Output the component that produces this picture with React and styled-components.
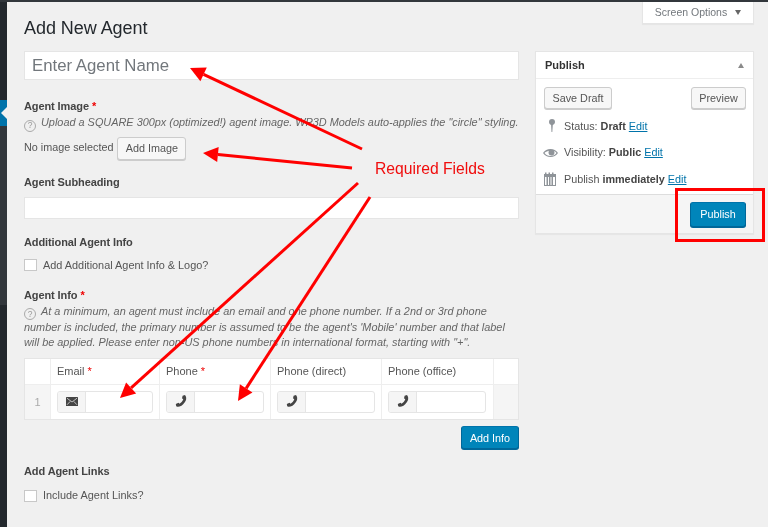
import React from "react";
import styled, { createGlobalStyle } from "styled-components";

const Global = createGlobalStyle`
  html, body { margin: 0; padding: 0; background: #f0f0f0; }
  * { box-sizing: border-box; }
  body { font: 11px/1.4 "Liberation Sans", Arial, sans-serif; color: #444; }
`;

const Page = styled.div`
  position: relative; width: 768px; height: 527px; overflow: hidden;
  display: flex; flex-direction: column; background: #f0f0f0; filter: blur(.35px);
`;
const TopBar = styled.div`height: 2px; background: #32373c; flex: none;`;
const Shell = styled.div`display: flex; flex: 1; min-height: 0;`;
const Sidebar = styled.div`width: 7px; flex: none; display: flex; flex-direction: column; background: #23282d;`;
const SideTop = styled.div`height: 98px; background: #23282d;`;
const SideActive = styled.div`
  height: 26px; background: #0073aa; display: flex; align-items: center; justify-content: flex-end;
  &::after { content: ""; border: 6px solid transparent; border-right-color: #f1f1f1; border-left-width: 0; }
`;
const SideSub = styled.div`height: 179px; background: #32373c;`;
const Main = styled.div`flex: 1; padding: 0 14px 0 17px; min-width: 0;`;
const Header = styled.div`display: flex; justify-content: space-between; align-items: flex-start; height: 49px;`;
const ScreenTab = styled.div`
  width: 112px; height: 22px; background: #fff; border: 1px solid #e5e5e5; border-top: 0;
  box-shadow: 0 1px 1px rgba(0,0,0,.04); display: flex; align-items: center; justify-content: center; gap: 8px;
  color: #72777c; font-size: 10.5px;
`;
const Caret = styled.span`
  width: 0; height: 0; border-left: 3.5px solid transparent; border-right: 3.5px solid transparent;
  ${p => p.$up ? "border-bottom: 5px solid #8a8a8a;" : "border-top: 5px solid #666;"}
`;
const Title = styled.h1`
  margin: 15px 0 0; font-size: 18px; line-height: 22px; font-weight: 400; color: #23282d; letter-spacing: -.05px;
`;
const Columns = styled.div`display: grid; grid-template-columns: 495px 219px; gap: 16px; align-items: start;`;
const Left = styled.div`display: flex; flex-direction: column; min-width: 0;`;
const TitleInput = styled.div`
  height: 29px; background: #fff; border: 1px solid #e5e5e5; padding-left: 7px;
  font-size: 16.8px; line-height: 28px; color: #72777c;
`;
const Field = styled.div`margin-top: ${p => p.$top}px;`;
const Label = styled.div`font-size: 11px; font-weight: 700; line-height: 16px; color: #444; letter-spacing: -.1px;`;
const Req = styled.span`color: #e00; margin-left: 3px;`;
const Help = styled.div`font-size: 10.9px; font-style: italic; line-height: 15px; padding-top: 1px; color: #666; white-space: nowrap;`;
const HelpIcon = styled.span`
  display: inline-flex; width: 12px; height: 12px; border: 1px solid #aaa; border-radius: 50%; margin-right: 5px;
  align-items: center; justify-content: center; font-size: 8.5px; font-style: normal; color: #999; vertical-align: -2px;
`;
const ImageRow = styled.div`display: flex; align-items: center; gap: 4px; margin-top: 5px; font-size: 10.8px; color: #555;`;
const Button = styled.div`
  display: flex; align-items: center; justify-content: center; height: ${p => p.$h || 23}px; width: ${p => p.$w}px;
  border: 1px solid #ccc; border-radius: 3px; background: #f7f7f7; box-shadow: 0 1px 0 #ccc; padding-top: 1px;
  font-size: 10.8px; color: #555;
`;
const PrimaryButton = styled(Button)`
  background: #0085ba; border-color: #0073aa #006799 #006799; box-shadow: 0 1px 0 #006799; color: #fff;
`;
const TextBox = styled.div`height: 22px; background: #fff; border: 1px solid #e5e5e5; margin-top: 7px;`;
const CheckRow = styled.div`display: flex; align-items: center; gap: 6px; margin-top: ${p => p.$top}px; font-size: 10.9px; color: #555;`;
const Check = styled.span`width: 13px; height: 12px; background: #fff; border: 1px solid #c8c8c8; flex: none;`;
const Table = styled.div`
  margin-top: 8px; height: 62px; background: #fff; border: 1px solid #e5e5e5;
  display: grid; grid-template-columns: 25px 109px 111px 111px 112px 1fr; grid-template-rows: 26px 1fr;
`;
const HeadCell = styled.div`
  border-left: ${p => p.$first ? 0 : "1px solid #eee"}; border-bottom: 1px solid #eee; padding-left: 6px;
  display: flex; align-items: center; font-size: 11px; color: #555;
`;
const IndexCell = styled.div`
  background: #f5f5f5; display: flex; align-items: center; justify-content: center; color: #aaa; font-size: 11px;
`;
const BodyCell = styled.div`border-left: 1px solid #eee; padding: 6px 6px 0 6px; background: ${p => p.$empty ? "#f5f5f5" : "#fff"};`;
const Group = styled.div`display: flex; height: 22px; width: ${p => p.$w}px; border: 1px solid #e5e5e5; border-radius: 3px; overflow: hidden; background: #fff;`;
const Addon = styled.span`width: 28px; flex: none; background: #f5f5f5; border-right: 1px solid #e5e5e5; display: flex; align-items: center; justify-content: center; color: #444; padding-bottom: 2px;`;
const ActionRow = styled.div`display: flex; justify-content: flex-end; margin-top: 6px;`;
const Panel = styled.div`background: #fff; border: 1px solid #e5e5e5; box-shadow: 0 1px 1px rgba(0,0,0,.04); height: 183px; display: flex; flex-direction: column;`;
const PanelHead = styled.div`height: 27px; padding: 1px 9px 0; border-bottom: 1px solid #eee; display: flex; align-items: center; justify-content: space-between; font-size: 11px; font-weight: 700; color: #333; flex: none;`;
const PanelBody = styled.div`flex: 1; padding: 8px 7px 0 8px; display: flex; flex-direction: column;`;
const ButtonRow = styled.div`display: flex; justify-content: space-between; margin-bottom: 4px;`;
const MetaRow = styled.div`display: flex; align-items: center; height: 26.5px; font-size: 10.8px; color: #555;`;
const MetaIcon = styled.span`width: 20px; flex: none; display: flex; color: #8f9499;`;
const Strong = styled.b`color: #444; margin: 0 3px;`;
const Link = styled.span`color: #0073aa; text-decoration: underline;`;
const PanelFoot = styled.div`height: 39px; flex: none; background: #f5f5f5; border-top: 1px solid #ddd; display: flex; justify-content: flex-end; padding: 7px 7px 0 0;`;

const Overlay = styled.svg`position: absolute; inset: 0; pointer-events: none;`;
const Note = styled.div`position: absolute; left: 375px; top: 160px; color: #f00d0d; font-size: 15.7px; line-height: 18px; white-space: nowrap;`;
const RedBox = styled.div`position: absolute; left: 675px; top: 188px; width: 90px; height: 54px; border: 3px solid #f00; pointer-events: none;`;

const Mail = () => (
  <svg width="12" height="9" viewBox="0 0 12 9">
    <rect width="12" height="9" rx=".6" fill="#444" />
    <path fill="none" stroke="#ddd" strokeWidth=".8" d="M1 1.200 6 5l5-3.800M1 7.800l3.200-3.400M11 7.800 7.800 4.400" />
  </svg>
);
const Phone = () => (
  <svg width="12" height="12" viewBox="0 0 12 12"><path fill="#444" d="M7.600 0.800 10 0c1.200 1.500 1.700 3.600.7 5.700-1.200 2.400-3.500 5-6.100 5.900-1.100.3-2.200.2-3.400-.4L.8 8.900l2.700-1.200 1 1.100C6.400 7.900 7.700 6 8.300 4.100L7 3.400z" /></svg>
);
const Pin = () => (
  <svg width="16" height="16" viewBox="0 0 16 16"><path fill="currentColor" d="M5 4a3 3 0 1 1 6 0c0 1.600-1.200 2.600-2.200 2.900L8.300 14h-.8l-.4-7.100C6 6.600 5 5.600 5 4z" /></svg>
);
const Eye = () => (
  <svg width="15" height="12" viewBox="0 0 15 12" style={{ marginLeft: -1 }}><path fill="currentColor" fillRule="evenodd" d="M0 6c1.800-2.600 4.400-4 7.500-4S13.200 3.400 15 6c-1.800 2.600-4.400 4-7.500 4S1.800 8.600 0 6zm1.500 0c1.400 1.800 3.400 3 6 3s4.600-1.200 6-3c-.7-.9-1.500-1.600-2.500-2.200.3.500.5 1.100.5 1.700a3 3 0 0 1-6 0c0-.6.200-1.200.5-1.700C4 4.400 2.200 5.100 1.500 6z" /></svg>
);
const Calendar = () => (
  <svg width="14" height="14" viewBox="0 0 14 14" style={{ marginLeft: -1 }}><path fill="currentColor" fillRule="evenodd" d="M1 2h1V.5h1.500V2h2V.5H7V2h2V.5h1.500V2H13v12H1zm1 3v8h1.500V5zm3 0v8h1V5zm2.500 0v8h1V5zM10 5v8h2V5z" /></svg>
);

const tableHead = [["Email", true], ["Phone", true], ["Phone (direct)"], ["Phone (office)"]];
const tableInputs = [[<Mail />, 96], [<Phone />, 98], [<Phone />, 98], [<Phone />, 98]];

const arrows = [
  [362, 149, 190, 68],
  [352, 168, 203, 153],
  [358, 183, 120, 398],
  [370, 197, 238, 401],
];

function Arrow({ a }) {
  const [x1, y1, x2, y2] = a;
  const len = Math.hypot(x2 - x1, y2 - y1);
  const ux = (x2 - x1) / len, uy = (y2 - y1) / len;
  const bx = x2 - ux * 15, by = y2 - uy * 15;
  const w = 7.5;
  return (
    <g>
      <line x1={x1} y1={y1} x2={bx} y2={by} stroke="#f00" strokeWidth="3" />
      <polygon fill="#f00" points={`${x2},${y2} ${bx - uy * w},${by + ux * w} ${bx + uy * w},${by - ux * w}`} />
    </g>
  );
}

export default function App() {
  return (
    <Page>
      <Global />
      <TopBar />
      <Shell>
        <Sidebar>
          <SideTop />
          <SideActive />
          <SideSub />
        </Sidebar>
        <Main>
          <Header>
            <Title>Add New Agent</Title>
            <ScreenTab>Screen Options <Caret /></ScreenTab>
          </Header>
          <Columns>
            <Left>
              <TitleInput>Enter Agent Name</TitleInput>
              <Field $top={18}>
                <Label>Agent Image<Req>*</Req></Label>
                <Help><HelpIcon>?</HelpIcon>Upload a SQUARE 300px (optimized!) agent image. WP3D Models auto-applies the "circle" styling.</Help>
              </Field>
              <ImageRow>No image selected <Button $w={69}>Add Image</Button></ImageRow>
              <Field $top={14}>
                <Label>Agent Subheading</Label>
                <TextBox />
              </Field>
              <Field $top={15}>
                <Label>Additional Agent Info</Label>
                <CheckRow $top={8}><Check />Add Additional Agent Info &amp; Logo?</CheckRow>
              </Field>
              <Field $top={14}>
                <Label>Agent Info<Req>*</Req></Label>
                <Help><HelpIcon>?</HelpIcon>At a minimum, an agent must include an email and one phone number. If a 2nd or 3rd phone<br />number is included, the primary number is assumed to be the agent's 'Mobile' number and that label<br />will be applied. Please enter non-US phone numbers in international format, starting with "+".</Help>
              </Field>
              <Table>
                <HeadCell $first />
                {tableHead.map(([t, r]) => <HeadCell key={t}>{t}{r && <Req>*</Req>}</HeadCell>)}
                <HeadCell />
                <IndexCell>1</IndexCell>
                {tableInputs.map(([icon, w], i) => (
                  <BodyCell key={i}><Group $w={w}><Addon>{icon}</Addon></Group></BodyCell>
                ))}
                <BodyCell $empty />
              </Table>
              <ActionRow><PrimaryButton $w={58}>Add Info</PrimaryButton></ActionRow>
              <Field $top={14}>
                <Label>Add Agent Links</Label>
                <CheckRow $top={9}><Check />Include Agent Links?</CheckRow>
              </Field>
            </Left>
            <Panel>
              <PanelHead>Publish <Caret $up /></PanelHead>
              <PanelBody>
                <ButtonRow>
                  <Button $w={68} $h={22}>Save Draft</Button>
                  <Button $w={55} $h={22}>Preview</Button>
                </ButtonRow>
                <MetaRow><MetaIcon><Pin /></MetaIcon>Status:<Strong>Draft</Strong><Link>Edit</Link></MetaRow>
                <MetaRow><MetaIcon><Eye /></MetaIcon>Visibility:<Strong>Public</Strong><Link>Edit</Link></MetaRow>
                <MetaRow><MetaIcon><Calendar /></MetaIcon>Publish<Strong>immediately</Strong><Link>Edit</Link></MetaRow>
              </PanelBody>
              <PanelFoot><PrimaryButton $w={56} $h={25}>Publish</PrimaryButton></PanelFoot>
            </Panel>
          </Columns>
        </Main>
      </Shell>
      <Overlay width="768" height="527" viewBox="0 0 768 527">
        {arrows.map((a, i) => <Arrow key={i} a={a} />)}
      </Overlay>
      <Note>Required Fields</Note>
      <RedBox />
    </Page>
  );
}
